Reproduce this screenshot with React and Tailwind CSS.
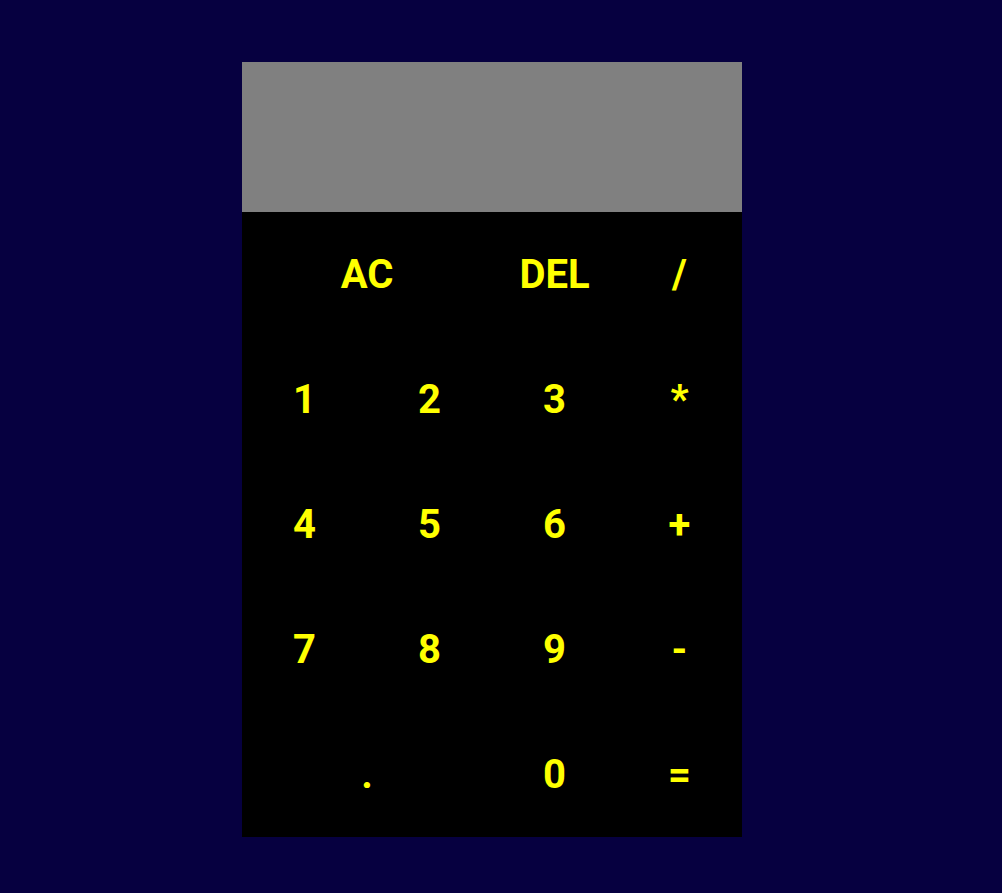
export default function App() {
  const btn = "flex items-center justify-center text-[40px] font-bold text-[#ffff00] h-[125px]";
  return (
    <div className="min-h-screen w-full bg-[#060040] flex pl-[242px] pt-[62px]" style={{ fontFamily: "Roboto, 'Noto Sans', sans-serif" }}>
      <div className="w-[500px] h-[775px] bg-black flex flex-col">
        <div className="h-[150px] bg-[#808080]"></div>
        <div className="grid grid-cols-4">
          <button className={btn + " col-span-2"}>AC</button>
          <button className={btn}>DEL</button>
          <button className={btn}>/</button>
          <button className={btn}>1</button>
          <button className={btn}>2</button>
          <button className={btn}>3</button>
          <button className={btn}>*</button>
          <button className={btn}>4</button>
          <button className={btn}>5</button>
          <button className={btn}>6</button>
          <button className={btn}>+</button>
          <button className={btn}>7</button>
          <button className={btn}>8</button>
          <button className={btn}>9</button>
          <button className={btn}>-</button>
          <button className={btn + " col-span-2"}>.</button>
          <button className={btn}>0</button>
          <button className={btn}>=</button>
        </div>
      </div>
    </div>
  );
}
